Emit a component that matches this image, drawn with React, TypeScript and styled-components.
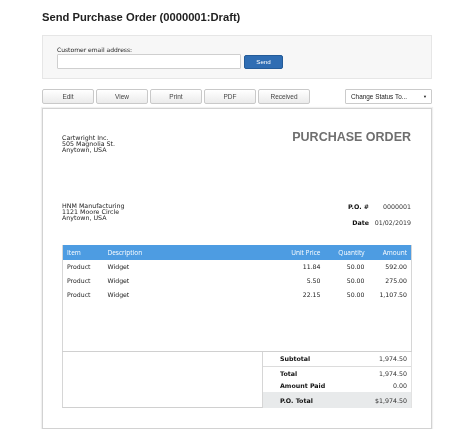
import React from "react";
import styled, { createGlobalStyle } from "styled-components";

const GlobalStyle = createGlobalStyle`
  body {
    margin: 0;
    background: #ffffff;
    font-family: "DejaVu Sans", Verdana, sans-serif;
    color: #222;
    -webkit-font-smoothing: antialiased;
  }
`;

const items = [
  { item: "Product", desc: "Widget", price: "11.84", qty: "50.00", amount: "592.00" },
  { item: "Product", desc: "Widget", price: "5.50", qty: "50.00", amount: "275.00" },
  { item: "Product", desc: "Widget", price: "22.15", qty: "50.00", amount: "1,107.50" },
];

const App = () => {
  return (
    <>
      <GlobalStyle />
      <Page>
        <Title>Send Purchase Order (0000001:Draft)</Title>
        <SendPanel>
          <Label>Customer email address:</Label>
          <SendRow>
            <EmailInput type="text" />
            <SendButton>Send</SendButton>
          </SendRow>
        </SendPanel>

        <Toolbar>
          <ToolButton>Edit</ToolButton>
          <ToolButton>View</ToolButton>
          <ToolButton>Print</ToolButton>
          <ToolButton>PDF</ToolButton>
          <ToolButton>Received</ToolButton>
          <StatusSelect>
            <span>Change Status To...</span>
            <Arrow>▼</Arrow>
          </StatusSelect>
        </Toolbar>

        <Doc>
          <TopRow>
            <Address>
              Cartwright Inc.<br />
              505 Magnolia St.<br />
              Anytown, USA
            </Address>
            <DocTitle>PURCHASE ORDER</DocTitle>
          </TopRow>

          <MidRow>
            <Address>
              HNM Manufacturing<br />
              1121 Moore Circle<br />
              Anytown, USA
            </Address>
            <Meta>
              <MetaLabel>P.O. #</MetaLabel>
              <MetaValue>0000001</MetaValue>
              <MetaLabel>Date</MetaLabel>
              <MetaValue>01/02/2019</MetaValue>
            </Meta>
          </MidRow>

          <ItemsTable>
            <colgroup>
              <col style={{ width: 41 }} />
              <col />
              <col style={{ width: 54 }} />
              <col style={{ width: 44 }} />
              <col style={{ width: 43 }} />
            </colgroup>
            <thead>
              <tr>
                <Th>Item</Th>
                <Th>Description</Th>
                <Th $right>Unit Price</Th>
                <Th $right>Quantity</Th>
                <Th $right>Amount</Th>
              </tr>
            </thead>
            <tbody>
              {items.map((r, i) => (
                <tr key={i}>
                  <Td>{r.item}</Td>
                  <Td>{r.desc}</Td>
                  <Td $right>{r.price}</Td>
                  <Td $right>{r.qty}</Td>
                  <Td $right>{r.amount}</Td>
                </tr>
              ))}
              <FillerRow>
                <td colSpan={5} />
              </FillerRow>
            </tbody>
          </ItemsTable>

          <Totals>
            <Notes />
            <TotalsBox>
              <TotalRow $sep>
                <TotalLabel>Subtotal</TotalLabel>
                <TotalValue>1,974.50</TotalValue>
              </TotalRow>
              <TotalRow>
                <TotalLabel>Total</TotalLabel>
                <TotalValue>1,974.50</TotalValue>
              </TotalRow>
              <TotalRow>
                <TotalLabel>Amount Paid</TotalLabel>
                <TotalValue>0.00</TotalValue>
              </TotalRow>
              <TotalRow $band>
                <TotalLabel>P.O. Total</TotalLabel>
                <TotalValue>$1,974.50</TotalValue>
              </TotalRow>
            </TotalsBox>
          </Totals>
        </Doc>
      </Page>
    </>
  );
};

export default App;

const Page = styled.div`
  width: 390px;
  margin: 0 auto;
  padding-top: 10px;
  will-change: transform;
`;

const Title = styled.h1`
  margin: 0 0 11px 0;
  font-family: "Liberation Sans", Arial, sans-serif;
  font-size: 11.2px;
  line-height: 14px;
  font-weight: bold;
  color: #222;
`;

const SendPanel = styled.div`
  box-sizing: border-box;
  height: 44px;
  background: #f7f7f7;
  border: 1px solid #e6e6e6;
  padding: 10px 0 0 14px;
`;

const Label = styled.div`
  font-size: 6px;
  line-height: 7px;
  color: #222;
`;

const SendRow = styled.div`
  display: flex;
  align-items: center;
  gap: 3px;
  margin-top: 1px;
`;

const EmailInput = styled.input`
  box-sizing: border-box;
  width: 184px;
  height: 15px;
  margin: 0;
  padding: 0 3px;
  background: #fff;
  border: 1px solid #cfcfcf;
  border-radius: 1px;
`;

const SendButton = styled.button`
  box-sizing: border-box;
  width: 39px;
  height: 14px;
  margin: 0;
  padding: 0;
  background: #2f6db3;
  border: 1px solid #245b98;
  border-radius: 2px;
  color: #fff;
  font-family: "Liberation Sans", Arial, sans-serif;
  font-size: 6.2px;
`;

const Toolbar = styled.div`
  display: flex;
  align-items: center;
  gap: 2px;
  margin-top: 10px;
`;

const ToolButton = styled.button`
  box-sizing: border-box;
  width: 52px;
  height: 15px;
  margin: 0;
  padding: 0;
  background: linear-gradient(#ffffff, #ebebeb);
  border: 1px solid #c9c9c9;
  border-radius: 2px;
  color: #444;
  font-family: "Liberation Sans", Arial, sans-serif;
  font-size: 6.5px;
`;

const StatusSelect = styled.div`
  box-sizing: border-box;
  margin-left: auto;
  width: 87px;
  height: 15px;
  display: flex;
  align-items: center;
  justify-content: space-between;
  padding: 0 4px 0 5px;
  background: #fff;
  border: 1px solid #cbcbcb;
  border-radius: 1px;
  font-family: "Liberation Sans", Arial, sans-serif;
  font-size: 6.4px;
  color: #222;
`;

const Arrow = styled.span`
  font-size: 4px;
  color: #111;
`;

const Doc = styled.div`
  box-sizing: border-box;
  margin-top: 4px;
  height: 321px;
  border: 1px solid #d2d2d2;
  box-shadow: 0 0 1px 1px rgba(0, 0, 0, 0.06);
  padding: 21px 19px 0 19px;
`;

const TopRow = styled.div`
  display: flex;
  justify-content: space-between;
  align-items: flex-start;
`;

const Address = styled.div`
  margin-top: 4.5px;
  font-size: 6.3px;
  line-height: 6px;
  color: #222;
`;

const DocTitle = styled.div`
  margin-right: 1px;
  font-family: "Liberation Sans", Arial, sans-serif;
  font-size: 12.5px;
  line-height: 14px;
  font-weight: bold;
  color: #6f6f6f;
`;

const MidRow = styled.div`
  display: flex;
  justify-content: space-between;
  align-items: flex-start;
  margin-top: 46px;
`;

const Meta = styled.div`
  display: grid;
  grid-template-columns: auto auto;
  grid-auto-rows: 16px;
  column-gap: 4px;
  align-items: center;
  font-size: 6.3px;
  margin-right: 1px;
`;

const MetaLabel = styled.div`
  text-align: right;
  font-weight: bold;
  color: #111;
`;

const MetaValue = styled.div`
  text-align: right;
  min-width: 38px;
  color: #333;
`;

const ItemsTable = styled.table`
  width: 100%;
  margin-top: 14px;
  border-collapse: collapse;
  table-layout: fixed;
  font-size: 6.2px;
  border-left: 1px solid #d6d6d6;
  border-right: 1px solid #d6d6d6;
  border-bottom: 1px solid #d0d0d0;
`;

const Th = styled.th<{ $right?: boolean }>`
  height: 15px;
  padding: 0 4px;
  background: #4d9ce2;
  color: #fff;
  font-family: "Open Sans", "Liberation Sans", sans-serif;
  font-weight: normal;
  font-size: 6.5px;
  text-align: ${(p) => (p.$right ? "right" : "left")};
`;

const Td = styled.td<{ $right?: boolean }>`
  height: 14px;
  padding: 0 4px;
  color: #222;
  text-align: ${(p) => (p.$right ? "right" : "left")};
`;

const FillerRow = styled.tr`
  height: 50px;
`;

const Totals = styled.div`
  display: flex;
  height: 56px;
`;

const Notes = styled.div`
  flex: 1;
  border-left: 1px solid #d6d6d6;
  border-bottom: 1px solid #d0d0d0;
  border-right: 1px solid #d6d6d6;
`;

const TotalsBox = styled.div`
  width: 148px;
  display: flex;
  flex-direction: column;
  border-right: 1px solid #e2e2e2;
`;

const TotalRow = styled.div<{ $sep?: boolean; $band?: boolean }>`
  display: flex;
  align-items: center;
  justify-content: space-between;
  height: ${(p) => (p.$band ? "16px" : p.$sep ? "14px" : "13px")};
  padding: 0 4px 0 17px;
  background: ${(p) => (p.$band ? "#e8eaeb" : "transparent")};
  border-bottom: ${(p) => (p.$sep ? "1px solid #dcdcdc" : "none")};
  font-size: 6.3px;
`;

const TotalLabel = styled.span`
  font-weight: bold;
  color: #111;
`;

const TotalValue = styled.span`
  color: #333;
`;
